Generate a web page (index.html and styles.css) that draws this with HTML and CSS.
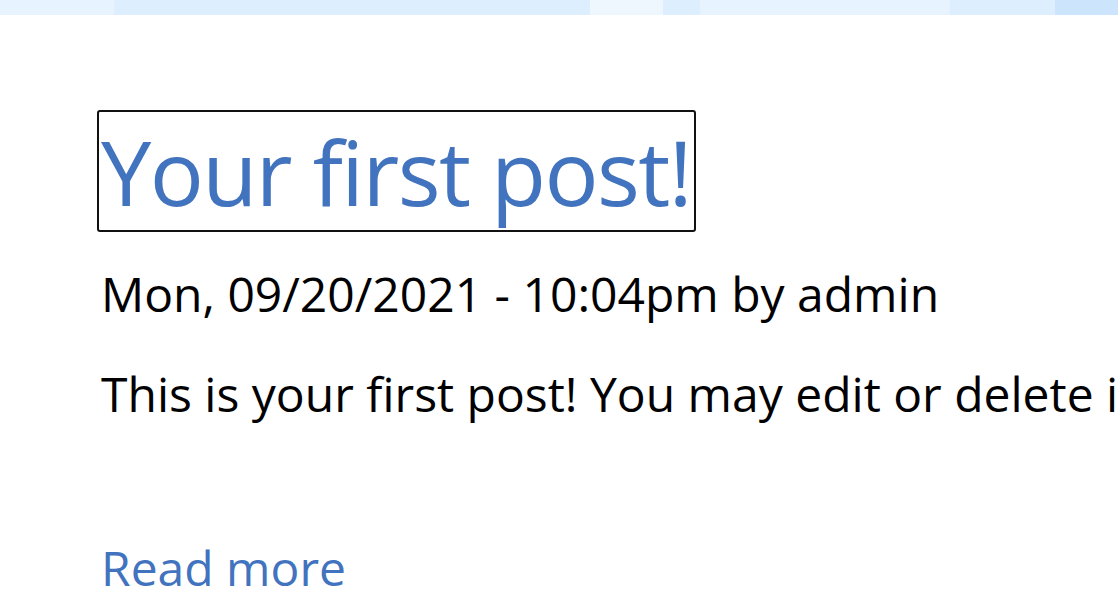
FILE: index.html
```html
<!DOCTYPE html>
<html lang="en">
<head>
<meta charset="utf-8">
<title>Your first post!</title>
<link rel="stylesheet" href="styles.css">
</head>
<body>
<header class="band"></header>
<main class="content">
  <article class="post">
    <h2 class="post-title"><a href="#" class="title-link">Your first post!</a></h2>
    <div class="meta">Mon, 09/20/2021 - 10:04pm by admin</div>
    <p class="body">This is your first post! You may edit or delete it.</p>
    <a href="#" class="read-more">Read more</a>
  </article>
</main>
</body>
</html>
```
FILE: styles.css
```css
html, body {
  margin: 0;
  padding: 0;
  background: #ffffff;
  overflow: hidden;
}
body {
  font-family: "Open Sans", "Noto Sans", sans-serif;
  color: #000;
  width: 1118px;
  height: 609px;
}
.band {
  height: 15px;
  background: linear-gradient(90deg,
    #e7f3fe 0, #e7f3fe 114px,
    #ddeefe 114px, #ddeefe 590px,
    #eef6fe 590px, #eef6fe 663px,
    #ddeefe 663px, #ddeefe 700px,
    #e7f3fe 700px, #e7f3fe 950px,
    #ddeefe 950px, #ddeefe 1055px,
    #cde5fc 1055px, #cde5fc 100%);
}
.content {
  padding: 0 0 0 97px;
}
.post {
  white-space: nowrap;
}
.post-title {
  margin: 95px 0 0 0;
  font-size: 90px;
  font-weight: 400;
  line-height: 1;
}
.title-link {
  display: inline-block;
  color: #4173be;
  text-decoration: none;
  border: 2px solid #111;
  border-radius: 3px;
  padding: 0 3px 0 2px;
  line-height: 118px;
  letter-spacing: -0.018em;
}
.meta {
  font-size: 48px;
  line-height: 64px;
  margin-top: 30px;
  padding-left: 4px;
}
.body {
  font-size: 48px;
  line-height: 64px;
  margin: 36px 0 0 0;
  padding-left: 4px;
}
.read-more {
  display: inline-block;
  font-size: 48px;
  line-height: 64px;
  margin-top: 110px;
  margin-left: 4px;
  color: #4173be;
  text-decoration: none;
}
```
